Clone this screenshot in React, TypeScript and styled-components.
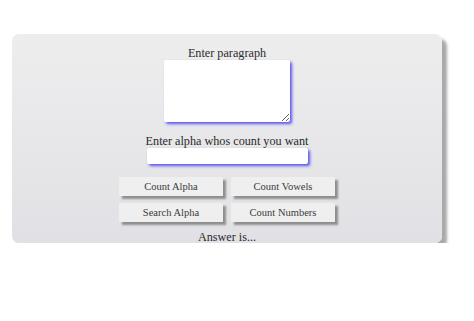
import React from 'react';
import styled, { createGlobalStyle } from 'styled-components';

const GlobalStyle = createGlobalStyle`
    body {
        margin: 0;
        background: #ffffff;
        font-family: "Liberation Serif", "DejaVu Serif", serif;
        color: #2b2b2b;
    }
`

const Card = styled.div`
    margin: 34px 0 0 12px;
    width: 430px;
    height: 209px;
    box-sizing: border-box;
    padding-top: 13px;
    border-radius: 7px;
    background: linear-gradient(to bottom, #eeedee, #e1e0e4);
    box-shadow: 5px 5px 3px #a9a9a9;
    display: flex;
    flex-direction: column;
    align-items: center;
`

const Label = styled.div`
    font-size: 12.2px;
    line-height: 13px;
`

const TextArea = styled.textarea`
    width: 126px;
    height: 62px;
    flex-shrink: 0;
    box-sizing: border-box;
    border: none;
    border-radius: 2px;
    background: #ffffff;
    box-shadow: 2px 2px 3px #5b55f0;
    margin: 0 0 13px 0;
    resize: both;
    outline: none;
`

const TextInput = styled.input`
    width: 161px;
    height: 16px;
    flex-shrink: 0;
    box-sizing: border-box;
    border: none;
    border-radius: 2px;
    background: #ffffff;
    box-shadow: 2px 2px 3px #5b55f0;
    outline: none;
    margin: 0 0 13px 0;
`

const ButtonGrid = styled.div`
    display: grid;
    grid-template-columns: 104px 104px;
    column-gap: 8px;
    row-gap: 7px;
    flex-shrink: 0;
`

const Button = styled.button`
    height: 19px;
    border: none;
    border-radius: 0;
    background: #efefef;
    box-shadow: 3px 3px 2px #8e8e8e;
    font-family: "Liberation Serif", "DejaVu Serif", serif;
    font-size: 10.5px;
    color: #3a3a3a;
    padding: 0;
    cursor: pointer;
`

const Answer = styled.div`
    margin-top: 9px;
    font-size: 12.2px;
    line-height: 13px;
    flex-shrink: 0;
`

export default function App() {
    return (
        <>
            <GlobalStyle/>
            <Card>
                <Label>Enter paragraph</Label>
                <TextArea/>
                <Label>Enter alpha whos count you want</Label>
                <TextInput/>
                <ButtonGrid>
                    <Button>Count Alpha</Button>
                    <Button>Count Vowels</Button>
                    <Button>Search Alpha</Button>
                    <Button>Count Numbers</Button>
                </ButtonGrid>
                <Answer>Answer is...</Answer>
            </Card>
        </>
    )
}
